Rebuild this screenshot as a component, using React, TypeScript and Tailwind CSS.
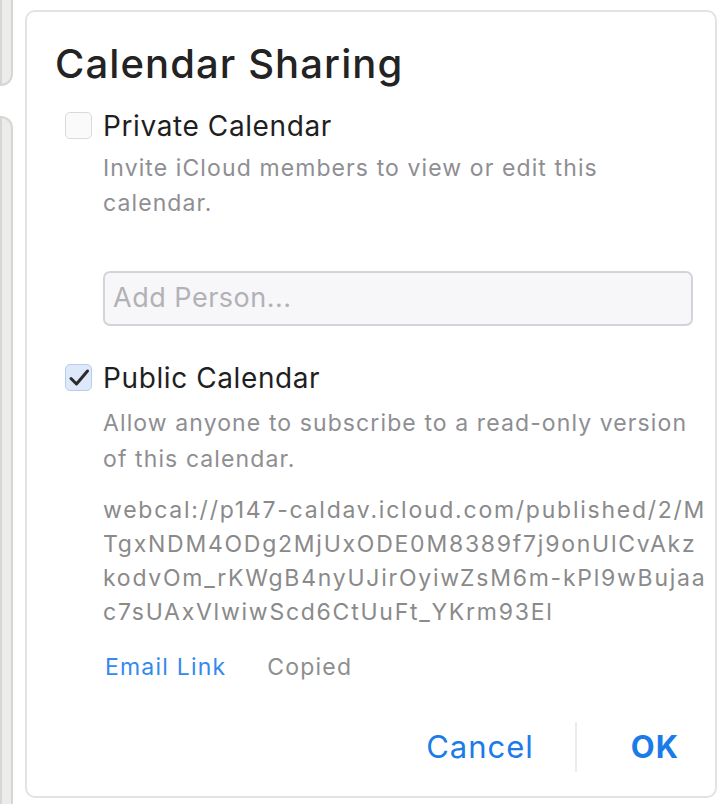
import React from "react";

const font = { fontFamily: "Inter, 'Noto Sans', sans-serif" };

const App: React.FC = () => {
  const urlLines = [
    "webcal://p147-caldav.icloud.com/published/2/M",
    "TgxNDM4ODg2MjUxODE0M8389f7j9onUlCvAkz",
    "kodvOm_rKWgB4nyUJirOyiwZsM6m-kPl9wBujaa",
    "c7sUAxVlwiwScd6CtUuFt_YKrm93El",
  ];

  return (
    <div
      className="relative flex h-[804px] w-[718px] overflow-hidden bg-white font-['Inter',sans-serif]"
      style={font}
    >
      {/* calendar behind the popover */}
      <div className="flex h-full w-[13px] shrink-0 flex-col">
        <div className="h-[86px] rounded-br-[12px] border-r-2 border-b-2 border-l-2 border-[#d6d6d4] bg-[#ececea]" />
        <div className="h-[30px] bg-white" />
        <div className="flex-1 rounded-tr-[12px] border-t-2 border-r-2 border-l-2 border-[#d6d6d4] bg-[#ececea]" />
      </div>

      {/* popover */}
      <div className="min-w-0 flex-1 pt-[10px] pr-[1px] pb-[6px] pl-[12px]">
        <div className="flex h-full flex-col rounded-[10px] border-2 border-[#e3e3e3] pt-[28px] pr-[22px] pl-[28px]">
          <h1 className="text-[40px] leading-[48px] font-medium tracking-[1.1px] text-[#232323]">
            Calendar Sharing
          </h1>

          {/* private */}
          <div className="mt-[21px] flex items-start gap-[11px] pl-[10px]">
            <div className="mt-[3px] h-[27px] w-[27px] shrink-0 rounded-[5px] border border-[#dadada] bg-[#fafafa]" />
            <div className="flex min-w-0 flex-1 flex-col">
              <span className="text-[28px] leading-[34px] tracking-[0.6px] text-[#1f1f1f]">
                Private Calendar
              </span>
              <p className="mt-[8px] text-[23px] leading-[35px] tracking-[1.1px] text-[#8e8e93]">
                Invite iCloud members to view or edit this
                <br />
                calendar.
              </p>
              <div className="mt-[50px] flex h-[55px] items-center rounded-[7px] border-2 border-[#d4d4d8] bg-[#f7f7fa] pl-[8px] text-[27px] tracking-[0.5px] text-[#b2b2b6]">
                Add Person...
              </div>
            </div>
          </div>

          {/* public */}
          <div className="mt-[35px] flex items-start gap-[11px] pl-[10px]">
            <div className="mt-[3px] flex h-[27px] w-[27px] shrink-0 items-center justify-center rounded-[5px] border border-[#b9cde8] bg-[#dde9fa]">
              <svg width="22" height="20" viewBox="0 0 22 20" fill="none">
                <path
                  d="M3 10.5 L8.5 16 L19.5 3"
                  stroke="#2b2b2b"
                  strokeWidth="3"
                  strokeLinecap="round"
                  strokeLinejoin="round"
                />
              </svg>
            </div>
            <div className="flex min-w-0 flex-1 flex-col">
              <span className="text-[28px] leading-[34px] tracking-[0.6px] text-[#1f1f1f]">
                Public Calendar
              </span>
              <p className="mt-[10px] text-[23px] leading-[36px] tracking-[1.1px] text-[#8e8e93]">
                Allow anyone to subscribe to a read-only version
                <br />
                of this calendar.
              </p>
              <p className="mt-[16px] text-[23px] leading-[34px] tracking-[1.75px] text-[#8a8a8a]">
                {urlLines.map((l) => (
                  <span key={l} className="block whitespace-nowrap">
                    {l}
                  </span>
                ))}
              </p>
              <div className="mt-[21px] flex items-center gap-[41px] pl-[2px] text-[23px] leading-[34px] tracking-[1.2px]">
                <span className="text-[#3389ef]">Email Link</span>
                <span className="text-[#8e8e8e]">Copied</span>
              </div>
            </div>
          </div>

          {/* footer */}
          <div className="mt-auto mb-[24px] flex items-center justify-end">
            <span className="text-[31px] tracking-[1px] text-[#1b7be9]">Cancel</span>
            <div className="mr-[54px] ml-[41px] h-[50px] w-[2px] bg-[#ececec]" />
            <span className="mr-[14px] text-[31px] font-bold tracking-[1px] text-[#1b7be9]">OK</span>
          </div>
        </div>
      </div>
    </div>
  );
};

export default App;
